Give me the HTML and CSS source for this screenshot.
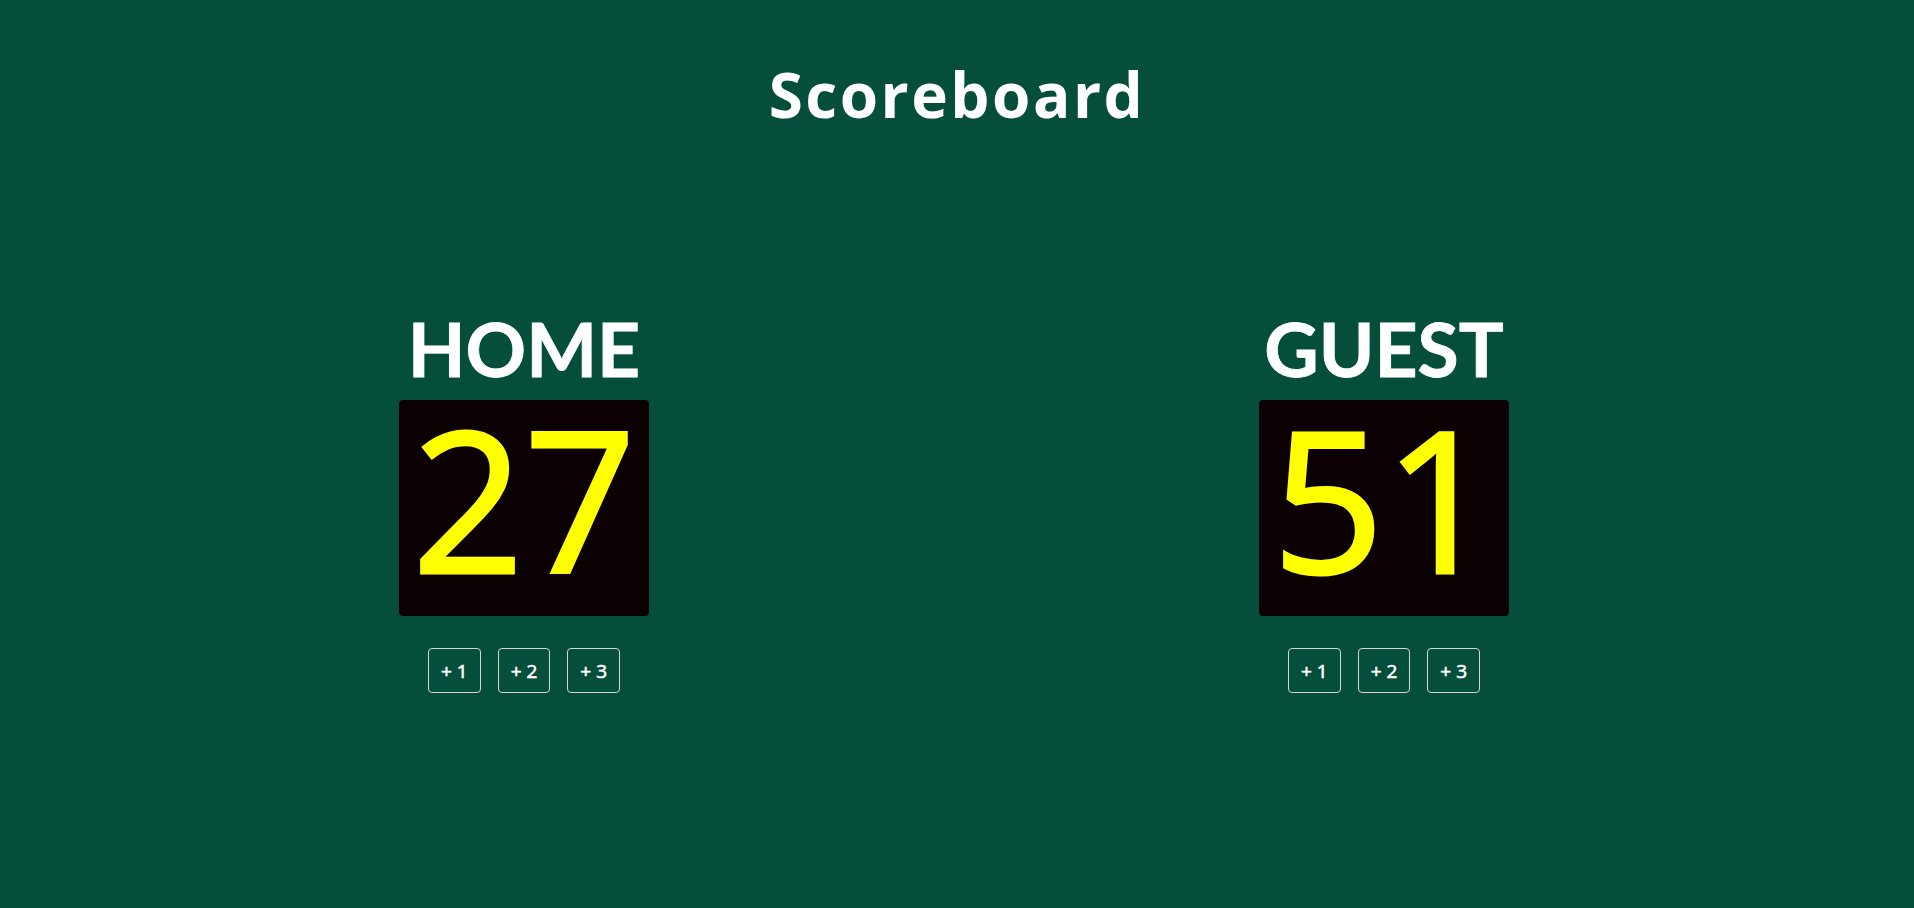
FILE: index.html
```html
<!DOCTYPE html>
<html lang="en">
<head>
<meta charset="utf-8">
<title>Scoreboard</title>
<link rel="stylesheet" href="styles.css">
</head>
<body>
<main class="page">
  <h1 class="title">Scoreboard</h1>
  <section class="board">
    <div class="team">
      <h2 class="team-name">HOME</h2>
      <div class="score">27</div>
      <div class="buttons">
        <button class="btn">+ 1</button>
        <button class="btn">+ 2</button>
        <button class="btn">+ 3</button>
      </div>
    </div>
    <div class="team">
      <h2 class="team-name">GUEST</h2>
      <div class="score">51</div>
      <div class="buttons">
        <button class="btn">+ 1</button>
        <button class="btn">+ 2</button>
        <button class="btn">+ 3</button>
      </div>
    </div>
  </section>
</main>
</body>
</html>
```
FILE: styles.css
```css
html, body {
  margin: 0;
  padding: 0;
  background: #064e3c;
  height: 100%;
}
body {
  font-family: "Open Sans", "Liberation Sans", sans-serif;
  color: #ffffff;
}
.page {
  display: flex;
  flex-direction: column;
  align-items: center;
  padding-top: 63px;
}
.title {
  margin: 0;
  font-size: 62px;
  line-height: 62px;
  font-weight: 700;
  letter-spacing: 2.5px;
}
.board {
  display: flex;
  justify-content: center;
  gap: 610px;
  margin-top: 178px;
  padding-right: 6px;
}
.team {
  width: 250px;
  display: flex;
  flex-direction: column;
  align-items: center;
}
.team-name {
  margin: 0 0 7px;
  font-family: "Lato", "Liberation Sans", sans-serif;
  font-size: 75px;
  line-height: 90px;
  font-weight: 700;
  white-space: nowrap;
  -webkit-text-stroke: 0.8px #ffffff;
}
.score {
  width: 250px;
  height: 216px;
  background: #0b0002;
  border-radius: 4px;
  color: #ffff00;
  font-size: 196px;
  font-weight: 400;
  -webkit-text-stroke: 3px #ffff00;
  line-height: 1;
  display: flex;
  align-items: center;
  justify-content: center;
  padding-bottom: 22px;
  box-sizing: border-box;
}
.buttons {
  display: flex;
  gap: 17px;
  margin-top: 32px;
}
.btn {
  height: 45px;
  padding: 0 12px;
  background: transparent;
  border: 1.5px solid #d6d6d6;
  border-radius: 4px;
  color: #ffffff;
  font-family: "Open Sans", "Liberation Sans", sans-serif;
  font-size: 19px;
  font-weight: 400;
  -webkit-text-stroke: 0.6px #ffffff;
}
```
